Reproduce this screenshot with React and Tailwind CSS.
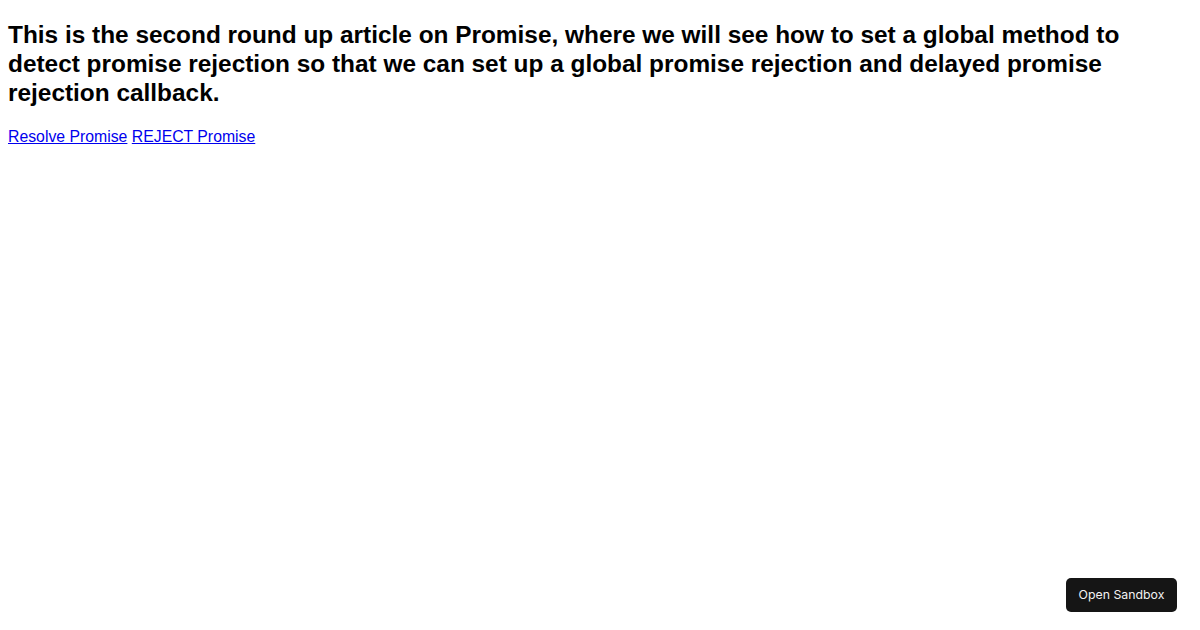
// Promise round-up demo page
export default function App() {
  return (
    <div className="min-h-[630px] bg-white px-2 pt-5 font-['Liberation_Sans',Arial,sans-serif] text-black">
      <h2 className="mb-[21px] text-[24.4px] font-bold leading-[29px]">
        This is the second round up article on Promise, where we will see how to set a global method to detect promise
        rejection so that we can set up a global promise rejection and delayed promise rejection callback.
      </h2>
      <div className="text-[15.8px] leading-[18px]">
        <a href="#" className="text-[#0000ee] underline">
          Resolve Promise
        </a>{' '}
        <a href="#" className="text-[#0000ee] underline">
          REJECT Promise
        </a>
      </div>

      {/* floating sandbox button */}
      <button className="fixed bottom-[18px] right-[23px] flex h-[34px] w-[111px] items-center justify-center rounded-[5px] bg-[#151515] font-['Inter',sans-serif] text-[12.3px] text-[#f2f2f2]">
        Open Sandbox
      </button>
    </div>
  )
}
